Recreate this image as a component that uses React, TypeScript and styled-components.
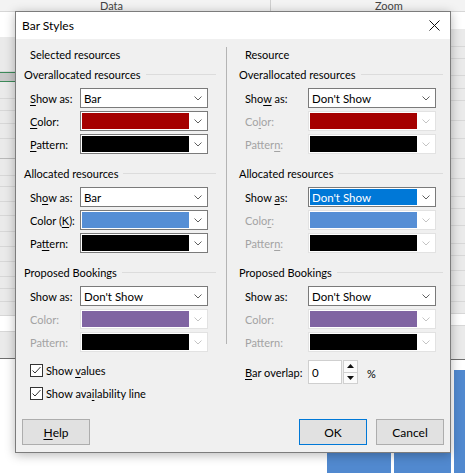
import React from 'react';
import styled, { createGlobalStyle } from 'styled-components';

const Global = createGlobalStyle`
  html, body { margin: 0; padding: 0; }
  body {
    width: 465px; height: 473px; overflow: hidden;
    font-family: Lato, "Noto Sans", sans-serif;
  }
  * { box-sizing: border-box; }
`;

/* ---------------- backdrop ---------------- */
const Page = styled.div`
  position: relative;
  width: 465px;
  height: 473px;
  overflow: hidden;
  background: #fff;
  display: flex;
  flex-direction: column;
`;

const TopStrip = styled.div`
  height: 12px;
  display: grid;
  grid-template-columns: 270px 1fr;
  background: #f3f3f3;
  border-bottom: 1px solid #d6d6d6;
`;

const TopCell = styled.div<{ $pad: number; $divider?: boolean }>`
  display: flex;
  align-items: center;
  padding-left: ${(p) => p.$pad}px;
  font-size: 11px;
  line-height: 11px;
  color: #444;
  border-left: ${(p) => (p.$divider ? '1px solid #cfcfcf' : 'none')};
`;

const Panes = styled.div`
  flex: 1;
  display: grid;
  grid-template-columns: 270px 1fr;
`;

const Pane = styled.div`
  display: flex;
  flex-direction: column;
`;

const Band = styled.div<{ $h: number; $bg: string; $line?: string; $top?: string }>`
  flex: 0 0 ${(p) => p.$h}px;
  background: ${(p) => p.$bg};
  border-bottom: ${(p) => (p.$line ? `1px solid ${p.$line}` : 'none')};
  border-top: ${(p) => (p.$top ? `1px solid ${p.$top}` : 'none')};
`;

const ChartArea = styled.div`
  flex: 1;
`;

const GREY = '#eaeaea';
const LINE = '#d7d7d7';

function bandsFrom(start: number, bounds: number[]) {
  const out: { h: number }[] = [];
  let prev = start;
  for (const b of bounds) {
    out.push({ h: b - prev });
    prev = b;
  }
  return out;
}

const leftBounds = [73, 83, 100, 112, 125, 140, 160, 177, 188, 203, 217, 233, 248, 263, 278, 290, 303, 317];
const rightBounds = [48, 60, 77, 90, 102, 122, 140, 160, 180, 198, 210, 227, 245, 257, 272, 287, 303, 315];

const Backdrop: React.FC = () => (
  <>
    <TopStrip>
      <TopCell $pad={100}>Data</TopCell>
      <TopCell $pad={104} $divider>Zoom</TopCell>
    </TopStrip>
    <Panes>
      <Pane>
        <Band $h={25} $bg="#fff" />
        {bandsFrom(38, leftBounds).map((b, i) =>
          i === 1 ? (
            <Band key={i} $h={b.h} $bg="#c9c9c9" $top="#3d8a5a" $line="#3d8a5a" />
          ) : (
            <Band key={i} $h={b.h} $bg={GREY} $line={i === 6 ? '#b9b9b9' : LINE} />
          )
        )}
        <Band $h={16} $bg="#fff" $line={LINE} />
        <Band $h={27} $bg={GREY} $line="#6e6e6e" />
      </Pane>
      <Pane>
        <Band $h={17} $bg="#fff" />
        {bandsFrom(30, rightBounds).map((b, i) => (
          <Band key={i} $h={b.h} $bg={GREY} $line={LINE} />
        ))}
        <Band $h={12} $bg="#fff" $line={LINE} />
        <Band $h={34} $bg={GREY} $line="#6e6e6e" />
        <ChartArea>
          <svg width="195" height="120" viewBox="0 0 195 120" style={{ display: 'block' }}>
            <rect x="57" y="10" width="64" height="110" fill="#5189cf" />
            <rect x="124" y="10" width="57" height="110" fill="#5189cf" />
            <rect x="184" y="10" width="11" height="110" fill="#5189cf" />
          </svg>
        </ChartArea>
      </Pane>
    </Panes>
  </>
);

/* ---------------- dialog ---------------- */
const Dialog = styled.div`
  position: absolute;
  left: 15px;
  top: 11px;
  width: 436px;
  height: 442px;
  border: 1px solid #7c7c7c;
  background: #f0f0f0;
  box-shadow: 0 2px 10px rgba(0, 0, 0, 0.28);
  display: flex;
  flex-direction: column;
  color: #000;
  font-size: 11px;
`;

const TitleBar = styled.div`
  height: 27px;
  flex: 0 0 27px;
  background: #fff;
  display: flex;
  align-items: center;
  justify-content: space-between;
  padding: 0 10px 0 6px;
  font-size: 12px;
`;

const CloseBtn = styled.div`
  width: 12px;
  height: 12px;
  display: flex;
  align-items: center;
  justify-content: center;
`;

const Body = styled.div`
  flex: 1;
  display: flex;
  flex-direction: column;
  padding-top: 8px;
`;

const Columns = styled.div`
  display: flex;
  padding-left: 8px;
`;

const Column = styled.div<{ $w: number }>`
  width: ${(p) => p.$w}px;
  display: flex;
  flex-direction: column;
`;

const Groups = styled.div`
  display: flex;
  flex-direction: column;
  gap: 11px;
`;

const VDivider = styled.div`
  width: 1px;
  margin: 0 12px 8px 10px;
  background: #b4b4b4;
  align-self: stretch;
`;

const Heading = styled.div`
  height: 16px;
  line-height: 16px;
  padding-left: 6px;
  margin-bottom: 3px;
`;

const Group = styled.div`
  display: flex;
  flex-direction: column;
`;

const GroupHeader = styled.div`
  height: 16px;
  display: flex;
  align-items: center;
  gap: 5px;
  margin-bottom: 6px;
  white-space: nowrap;
  &::after {
    content: '';
    flex: 1;
    height: 1px;
    background: #dcdcdc;
  }
`;

const Rows = styled.div`
  display: flex;
  flex-direction: column;
  gap: 3px;
`;

const Row = styled.div<{ $labelW: number }>`
  display: grid;
  grid-template-columns: ${(p) => p.$labelW}px 128px;
  align-items: center;
  height: 20px;
`;

const Label = styled.span<{ $disabled?: boolean }>`
  padding-left: 6px;
  color: ${(p) => (p.$disabled ? '#a3a3a3' : '#000')};
  white-space: nowrap;
`;

const Key = styled.span`
  text-decoration: underline;
  text-underline-offset: 2px;
  text-decoration-thickness: 1px;
`;

const Combo = styled.div<{ $disabled?: boolean }>`
  height: 20px;
  display: flex;
  align-items: stretch;
  background: #fff;
  border: 1px solid ${(p) => (p.$disabled ? '#e2e2e2' : '#7a7a7a')};
`;

const ComboText = styled.div<{ $selected?: boolean }>`
  flex: 1;
  margin: 1px 0 1px 1px;
  padding-left: 2px;
  display: flex;
  align-items: center;
  background: ${(p) => (p.$selected ? '#0078d7' : 'transparent')};
  color: ${(p) => (p.$selected ? '#fff' : '#000')};
  white-space: nowrap;
  font-size: 11.5px;
`;

const Swatch = styled.div<{ $color: string }>`
  flex: 1;
  margin: 1px 0 1px 1px;
  background: ${(p) => p.$color};
`;

const Arrow = styled.div`
  width: 18px;
  display: flex;
  align-items: center;
  justify-content: center;
`;

const Chevron: React.FC<{ disabled?: boolean }> = ({ disabled }) => (
  <svg width="8" height="5" viewBox="0 0 8 5">
    <polyline points="0.5,0.5 4,4 7.5,0.5" fill="none" stroke={disabled ? '#c4c4c4' : '#606060'} strokeWidth="1" />
  </svg>
);

type FieldProps = {
  label: React.ReactNode;
  labelW: number;
  disabled?: boolean;
  text?: string;
  color?: string;
  selected?: boolean;
};

const Field: React.FC<FieldProps> = ({ label, labelW, disabled, text, color, selected }) => (
  <Row $labelW={labelW}>
    <Label $disabled={disabled}>{label}</Label>
    <Combo $disabled={disabled}>
      {color ? <Swatch $color={color} /> : <ComboText $selected={selected}>{text}</ComboText>}
      <Arrow>
        <Chevron disabled={disabled} />
      </Arrow>
    </Combo>
  </Row>
);

const RED = '#a50000';
const BLUE = '#558ed5';
const PURPLE = '#8064a2';
const BLACK = '#000';

/* bottom options */
const Options = styled.div`
  display: flex;
  padding-left: 14px;
  margin-top: 8px;
`;

const Checks = styled.div`
  width: 215px;
  display: flex;
  flex-direction: column;
  gap: 10px;
  padding-top: 4px;
`;

const CheckRow = styled.label`
  display: flex;
  align-items: center;
  gap: 3px;
  height: 13px;
  white-space: nowrap;
`;

const Box = styled.span`
  width: 13px;
  height: 13px;
  border: 1px solid #333;
  background: #fff;
  display: flex;
  align-items: center;
  justify-content: center;
`;

const CheckBox: React.FC = () => (
  <Box>
    <svg width="11" height="11" viewBox="0 0 11 11">
      <polyline points="1.5,5.5 4,8 9.5,2" fill="none" stroke="#333" strokeWidth="1" />
    </svg>
  </Box>
);

const Overlap = styled.div`
  display: grid;
  grid-template-columns: 63px 34px 16px auto;
  align-items: center;
  height: 24px;
  white-space: nowrap;
`;

const NumInput = styled.div`
  height: 24px;
  background: #fff;
  border: 1px solid #cfcfcf;
  display: flex;
  align-items: center;
  padding-left: 3px;
  font-size: 11.5px;
`;

const Spin = styled.div`
  height: 24px;
  display: flex;
  flex-direction: column;
  margin-left: 1px;
`;

const SpinBtn = styled.div`
  flex: 1;
  border: 1px solid #d0d0d0;
  background: #fbfbfb;
  display: flex;
  align-items: center;
  justify-content: center;
  & + & { border-top: none; }
`;

const Percent = styled.span`
  padding-left: 9px;
  padding-top: 3px;
`;

const Footer = styled.div`
  margin-top: auto;
  display: flex;
  justify-content: space-between;
  padding: 0 6px 7px 6px;
`;

const Button = styled.div<{ $default?: boolean }>`
  width: 68px;
  height: 26px;
  background: #e1e1e1;
  border: 1px solid ${(p) => (p.$default ? '#0078d7' : '#adadad')};
  display: flex;
  align-items: center;
  justify-content: center;
  font-size: 12px;
`;

const RightButtons = styled.div`
  display: flex;
  gap: 9px;
`;

const L = 56;
const R = 69;

export default function App() {
  return (
    <Page>
      <Global />
      <Backdrop />
      <Dialog>
        <TitleBar>
          <span>Bar Styles</span>
          <CloseBtn>
            <svg width="11" height="11" viewBox="0 0 11 11">
              <line x1="0.5" y1="0.5" x2="10.5" y2="10.5" stroke="#111" strokeWidth="1" />
              <line x1="10.5" y1="0.5" x2="0.5" y2="10.5" stroke="#111" strokeWidth="1" />
            </svg>
          </CloseBtn>
        </TitleBar>
        <Body>
          <Columns>
            <Column $w={192}>
              <Heading>Selected resources</Heading>
              <Groups>
                <Group>
                  <GroupHeader>Overallocated resources</GroupHeader>
                  <Rows>
                    <Field labelW={L} label={<><Key>S</Key>how as:</>} text="Bar" />
                    <Field labelW={L} label={<><Key>C</Key>olor:</>} color={RED} />
                    <Field labelW={L} label={<><Key>P</Key>attern:</>} color={BLACK} />
                  </Rows>
                </Group>
                <Group>
                  <GroupHeader>Allocated resources</GroupHeader>
                  <Rows>
                    <Field labelW={L} label={<>Sh<Key>o</Key>w as:</>} text="Bar" />
                    <Field labelW={L} label={<>Color (<Key>K</Key>):</>} color={BLUE} />
                    <Field labelW={L} label={<>Pa<Key>t</Key>tern:</>} color={BLACK} />
                  </Rows>
                </Group>
                <Group>
                  <GroupHeader>Proposed Bookings</GroupHeader>
                  <Rows>
                    <Field labelW={L} label="Show as:" text="Don't Show" />
                    <Field labelW={L} label="Color:" color={PURPLE} disabled />
                    <Field labelW={L} label="Pattern:" color={BLACK} disabled />
                  </Rows>
                </Group>
              </Groups>
            </Column>
            <VDivider />
            <Column $w={204}>
              <Heading>Resource</Heading>
              <Groups>
                <Group>
                  <GroupHeader>Overallocated resources</GroupHeader>
                  <Rows>
                    <Field labelW={R} label={<>Sho<Key>w</Key> as:</>} text="Don't Show" />
                    <Field labelW={R} label={<>Co<Key>l</Key>or:</>} color={RED} disabled />
                    <Field labelW={R} label={<>Patter<Key>n</Key>:</>} color={BLACK} disabled />
                  </Rows>
                </Group>
                <Group>
                  <GroupHeader>Allocated resources</GroupHeader>
                  <Rows>
                    <Field labelW={R} label={<>Show <Key>a</Key>s:</>} text="Don't Show" selected />
                    <Field labelW={R} label={<>Colo<Key>r</Key>:</>} color={BLUE} disabled />
                    <Field labelW={R} label={<>Patter<Key>n</Key>:</>} color={BLACK} disabled />
                  </Rows>
                </Group>
                <Group>
                  <GroupHeader>Proposed Bookings</GroupHeader>
                  <Rows>
                    <Field labelW={R} label="Show as:" text="Don't Show" />
                    <Field labelW={R} label="Color:" color={PURPLE} disabled />
                    <Field labelW={R} label="Pattern:" color={BLACK} disabled />
                  </Rows>
                </Group>
              </Groups>
            </Column>
          </Columns>
          <Options>
            <Checks>
              <CheckRow>
                <CheckBox />
                <span>Show <Key>v</Key>alues</span>
              </CheckRow>
              <CheckRow>
                <CheckBox />
                <span>Show ava<Key>i</Key>lability line</span>
              </CheckRow>
            </Checks>
            <Overlap>
              <span><Key>B</Key>ar overlap:</span>
              <NumInput>0</NumInput>
              <Spin>
                <SpinBtn>
                  <svg width="7" height="4" viewBox="0 0 7 4"><polygon points="0,4 7,4 3.5,0" fill="#111" /></svg>
                </SpinBtn>
                <SpinBtn>
                  <svg width="7" height="4" viewBox="0 0 7 4"><polygon points="0,0 7,0 3.5,4" fill="#111" /></svg>
                </SpinBtn>
              </Spin>
              <Percent>%</Percent>
            </Overlap>
          </Options>
          <Footer>
            <Button><Key>H</Key>elp</Button>
            <RightButtons>
              <Button $default>OK</Button>
              <Button>Cancel</Button>
            </RightButtons>
          </Footer>
        </Body>
      </Dialog>
    </Page>
  );
}
